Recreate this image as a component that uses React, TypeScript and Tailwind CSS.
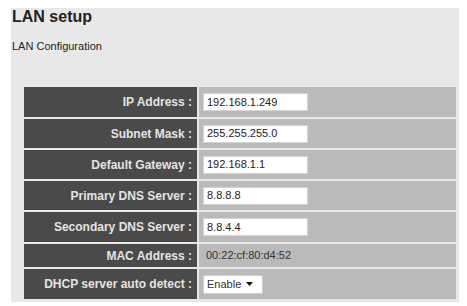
import type { ReactNode } from 'react'

// ---------------------------------------------------------------------------
// LAN setup form (router admin page)
// ---------------------------------------------------------------------------

interface Row {
  label: string
  height: string
  value: ReactNode
}

function TextBox({ value }: { value: string }) {
  return (
    <div className="flex h-[18px] w-[105px] items-center border border-[#d4d4d4] bg-white pl-[3px] text-[11px] text-[#222]">
      {value}
    </div>
  )
}

function SelectBox({ value }: { value: string }) {
  return (
    <div className="flex h-[19px] w-[60px] items-center justify-between rounded-[2px] border border-[#d0d0d0] bg-white pl-[3px] pr-[9px] text-[11px] text-[#333]">
      <span>{value}</span>
      <svg width="7" height="4" viewBox="0 0 7 4">
        <path d="M0 0h7L3.5 4z" fill="#111" />
      </svg>
    </div>
  )
}

const rows: Row[] = [
  { label: 'IP Address :', height: 'h-[30px]', value: <TextBox value="192.168.1.249" /> },
  { label: 'Subnet Mask :', height: 'h-[29px]', value: <TextBox value="255.255.255.0" /> },
  { label: 'Default Gateway :', height: 'h-[29px]', value: <TextBox value="192.168.1.1" /> },
  { label: 'Primary DNS Server :', height: 'h-[29px]', value: <TextBox value="8.8.8.8" /> },
  { label: 'Secondary DNS Server :', height: 'h-[30px]', value: <TextBox value="8.8.4.4" /> },
  {
    label: 'MAC Address :',
    height: 'h-[23px]',
    value: <span className="pl-[3px] text-[11px] text-[#333]">00:22:cf:80:d4:52</span>,
  },
  { label: 'DHCP server auto detect :', height: 'h-[30px]', value: <SelectBox value="Enable" /> },
]

export default function App() {
  return (
    <div
      className="h-[306px] w-[467px] bg-white pl-[11px] pt-[8px]"
      style={{ fontFamily: '"Liberation Sans", Arial, sans-serif' }}
    >
      <div className="h-[294px] w-[448px] bg-[#e8e8e8] pl-[1px]">
        <h1 className="text-[16px] font-bold leading-[18px] text-[#222]">LAN setup</h1>
        <p className="mt-[14px] text-[11px] leading-[13px] text-[#222]">LAN Configuration</p>

        {/* Settings table */}
        <div className="ml-[12px] mt-[34px] grid grid-cols-[173px_257px] gap-[2px]">
          {rows.map((row) => (
            <div key={row.label} className="contents">
              <div
                className={`flex ${row.height} items-center justify-end bg-[#4a4a4a] pr-[5px] text-[12px] font-bold text-[#e4e4e4]`}
              >
                {row.label}
              </div>
              <div className={`flex ${row.height} items-center bg-[#bababa] pl-[4px]`}>
                {row.value}
              </div>
            </div>
          ))}
        </div>
      </div>
    </div>
  )
}
